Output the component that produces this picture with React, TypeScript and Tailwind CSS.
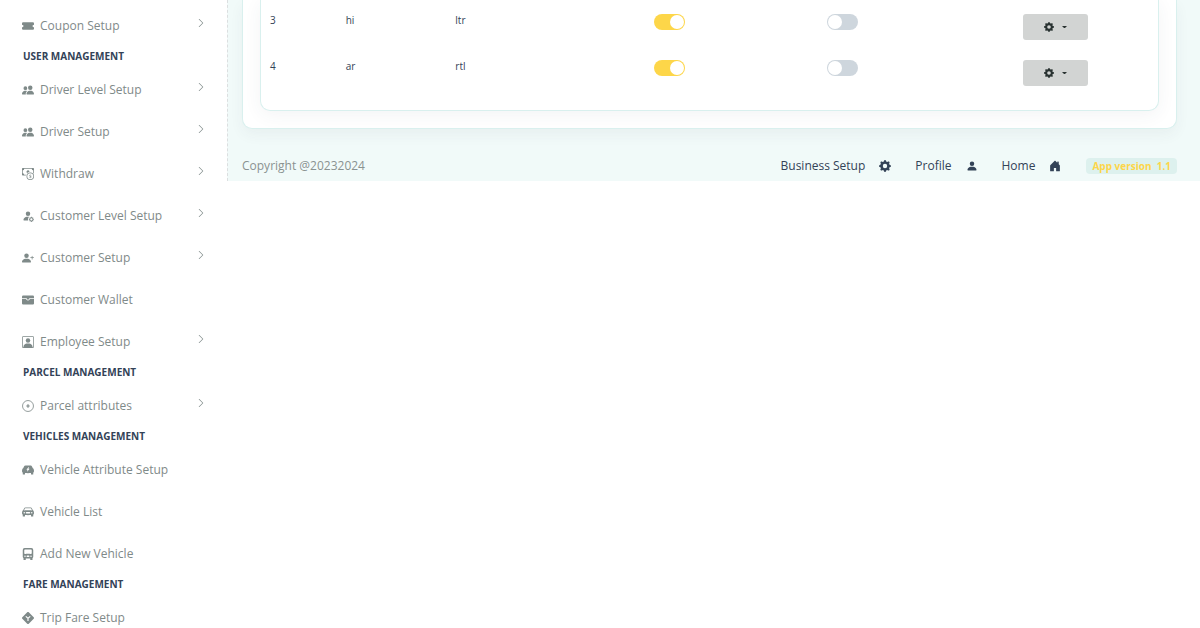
import type { ReactNode } from "react";
import {
  BsTicketFill, BsPeopleFill, BsCashCoin, BsPersonFillGear, BsPersonPlusFill, BsWalletFill, BsPersonSquare, BsEvFrontFill,
  BsCarFrontFill, BsTruckFrontFill, BsSignIntersectionYFill, BsGearFill, BsPersonFill, BsHouseDoorFill, BsChevronRight,
} from "react-icons/bs";

function TargetIcon() {
  return (
    <svg viewBox="0 0 16 16" className="size-3" fill="none" stroke="currentColor">
      <circle cx="8" cy="8" r="7.3" strokeWidth="1.1" />
      <path d="M8 5.7v4.6M5.7 8h4.6" strokeWidth="1.6" />
    </svg>
  );
}

type Item = { label: string; icon: ReactNode; more?: boolean };
type Group = { title?: string; items: Item[] };

const groups: Group[] = [
  { items: [{ label: "Coupon Setup", icon: <BsTicketFill />, more: true }] },
  {
    title: "User Management",
    items: [
      { label: "Driver Level Setup", icon: <BsPeopleFill />, more: true },
      { label: "Driver Setup", icon: <BsPeopleFill />, more: true },
      { label: "Withdraw", icon: <BsCashCoin />, more: true },
      { label: "Customer Level Setup", icon: <BsPersonFillGear />, more: true },
      { label: "Customer Setup", icon: <BsPersonPlusFill />, more: true },
      { label: "Customer Wallet", icon: <BsWalletFill /> },
      { label: "Employee Setup", icon: <BsPersonSquare />, more: true },
    ],
  },
  { title: "Parcel Management", items: [{ label: "Parcel attributes", icon: <TargetIcon />, more: true }] },
  {
    title: "Vehicles Management",
    items: [
      { label: "Vehicle Attribute Setup", icon: <BsEvFrontFill /> },
      { label: "Vehicle List", icon: <BsCarFrontFill /> },
      { label: "Add New Vehicle", icon: <BsTruckFrontFill /> },
    ],
  },
  { title: "Fare Management", items: [{ label: "Trip Fare Setup", icon: <BsSignIntersectionYFill /> }] },
];

function Toggle({ label, on }: { label: string; on: boolean }) {
  return (
    <input
      type="checkbox"
      role="switch"
      aria-label={label}
      defaultChecked={on}
      className="block h-4 w-[31px] cursor-pointer appearance-none rounded-full bg-[#ced6dd] p-px before:block before:size-3.5 before:rounded-full before:bg-white before:content-[''] checked:bg-[#fdd649] checked:before:ml-[15px]"
    />
  );
}

const languages = [
  { id: 3, code: "hi", direction: "ltr" },
  { id: 4, code: "ar", direction: "rtl" },
];

export default function App() {
  return (
    <div className="flex items-start bg-white font-['Open_Sans','Noto_Sans',sans-serif] text-[#334257]">
      <nav className="w-[227px] shrink-0 pt-[5px]">
        {groups.map((group, i) => (
          <section key={i}>
            {group.title && (
              <h2 className="pb-[3px] pl-[23px] text-[10px] leading-[19px] font-bold uppercase">{group.title}</h2>
            )}
            <ul className="flex flex-col">
              {group.items.map((item) => (
                <li key={item.label}>
                  <a href="#" className="flex h-[42px] items-center pr-[21px] pl-[22px] text-xs text-[#7f8a89]">
                    <span className="mr-1.5">{item.icon}</span>
                    <span className="grow">{item.label}</span>
                    {item.more && <BsChevronRight className="mb-1.5 size-2.5" />}
                  </a>
                </li>
              ))}
            </ul>
          </section>
        ))}
      </nav>

      <main className="min-w-0 grow border-l border-dashed border-[#dcdfe0] bg-[#f1faf9] pr-[23px] pl-3.5">
        <div className="rounded-b-[10px] border border-t-0 border-[#d9f0ee] bg-white px-[17px] pb-[17px] shadow-[0_6px_14px_rgba(51,66,87,0.05)]">
          <div className="rounded-b-[10px] border border-t-0 border-[#d9f0ee] bg-white pb-[18px] shadow-[0_4px_18px_rgba(51,66,87,0.06)]">
            <table className="w-full table-fixed text-left text-[10px] leading-[17px]">
              <colgroup>
                <col className="w-[9%]" />
                <col className="w-[12%]" />
                <col className="w-[22%]" />
                <col className="w-[19%]" />
                <col className="w-[22%]" />
                <col className="w-[16%]" />
              </colgroup>
              <tbody>
                {languages.map((l) => (
                  <tr key={l.id} className="h-[46px] align-top">
                    <td className="pt-3 pl-[9px]">{l.id}</td>
                    <td className="pt-3 pl-1">{l.code}</td>
                    <td className="pt-3 pl-1.5">{l.direction}</td>
                    <td className="pt-3.5 pl-[7px]"><Toggle label={`${l.code} status`} on /></td>
                    <td className="pt-3.5 pl-2.5"><Toggle label={`${l.code} default`} on={false} /></td>
                    <td className="pt-3.5 pl-[9px]">
                      <button type="button" aria-label={`${l.code} actions`} className="flex h-[26px] w-[65px] items-center justify-center gap-2 rounded-[3px] bg-[#d2d4d3] text-[#293231]">
                        <BsGearFill className="size-2.5" />
                        <svg viewBox="0 0 6 3" className="w-[5px]" fill="currentColor"><path d="M0 0h6L3 3z" /></svg>
                      </button>
                    </td>
                  </tr>
                ))}
              </tbody>
            </table>
          </div>
        </div>
        <footer className="flex items-center justify-between pt-[27px] pb-[5px] text-xs leading-5">
          <p className="text-[#8a9291]">Copyright @20232024</p>
          <div className="flex items-center">
            <a href="#" className="flex items-center gap-3.5">Business Setup <BsGearFill className="size-3" /></a>
            <a href="#" className="ml-6 flex items-center gap-3.5">Profile <BsPersonFill className="size-3" /></a>
            <a href="#" className="ml-6 flex items-center gap-3.5">Home <BsHouseDoorFill className="size-3" /></a>
            <span className="ml-[25px] rounded bg-[#ddf1ee] px-1.5 text-[10px] leading-4 font-bold whitespace-pre text-[#fdd649]">App version  1.1</span>
          </div>
        </footer>
      </main>
    </div>
  );
}
